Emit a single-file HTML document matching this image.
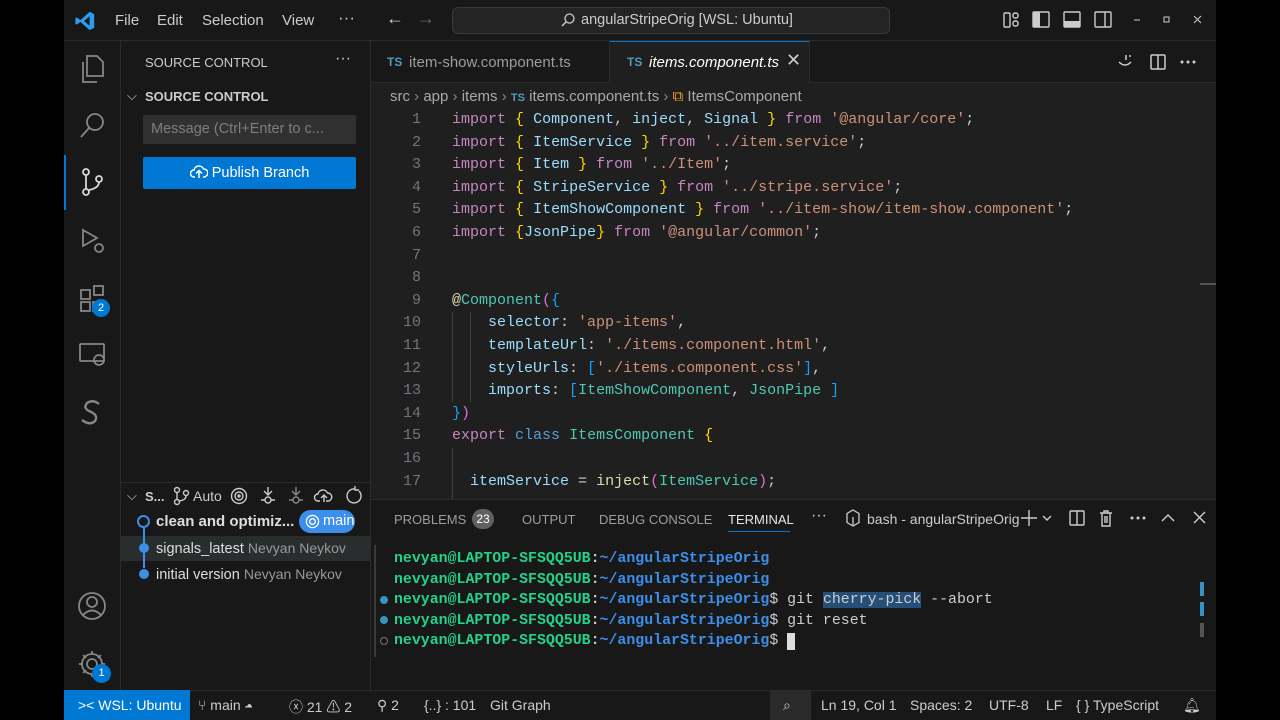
<!DOCTYPE html>
<html><head><meta charset="utf-8"><style>
*{box-sizing:border-box;margin:0;padding:0}
body{width:1280px;height:720px;background:#000;position:relative;overflow:hidden;font-family:"Liberation Sans",sans-serif;color:#ccc}
.a{position:absolute}
.mono{font-family:"Liberation Mono",monospace}
.code div{position:absolute;left:0;white-space:pre;font-size:15px;height:22px;line-height:22px}
.ln{color:#6e7681;width:81px;padding-right:31px;text-align:right;font-size:15px;display:inline-block}
.k{color:#c586c0}.b{color:#ffd700}.v{color:#9cdcfe}.s{color:#ce9178}.t{color:#4ec9b0}.p{color:#da70d6}.bl{color:#179fff}.kw{color:#569cd6}.f{color:#dcdcaa}
.term div{position:absolute;left:394px;white-space:pre;font-size:14.9px;font-weight:bold;line-height:20px}
.g{color:#23d18b}.tb{color:#3b8eea}
.st{font-size:14px;color:#ccc;top:697px}
</style></head><body>
<div class="a" style="left:64px;top:0;width:1152px;height:720px;background:#1f1f1f"></div>
<div class="a" style="left:64px;top:0;width:1152px;height:41px;background:#181818;border-bottom:1px solid #2b2b2b"></div>
<svg class="a" style="left:74px;top:10px" width="22" height="22" viewBox="0 0 24 24"><path d="M17 2 L22 4.5 V19.5 L17 22 L7 13 L3 16 L1.5 15 V9 L3 8 L7 11 Z M17 7 L11 12 L17 17 Z" fill="#2c9cf0"/></svg>
<div class="a" style="left:115px;top:12px;font-size:15px;color:#ccc">File</div>
<div class="a" style="left:157px;top:12px;font-size:15px">Edit</div>
<div class="a" style="left:202px;top:12px;font-size:15px">Selection</div>
<div class="a" style="left:282px;top:12px;font-size:15px">View</div>
<div class="a" style="left:338px;top:8px;font-size:17px">···</div>
<div class="a" style="left:386px;top:8px;font-size:18px">←</div>
<div class="a" style="left:417px;top:8px;font-size:18px;color:#666">→</div>
<div class="a" style="left:452px;top:7px;width:438px;height:27px;background:#242424;border:1px solid #3a3a3a;border-radius:6px"></div>
<svg class="a" style="left:560px;top:12px" width="16" height="16" viewBox="0 0 16 16"><circle cx="9.5" cy="6.5" r="4.5" fill="none" stroke="#ccc" stroke-width="1.3"/><path d="M6 10 L2 14" stroke="#ccc" stroke-width="1.5"/></svg>
<div class="a" style="left:581px;top:12px;font-size:14.5px;color:#ccc">angularStripeOrig [WSL: Ubuntu]</div>
<svg class="a" style="left:1003px;top:10px" width="200" height="20" viewBox="0 0 200 20">
<g fill="none" stroke="#ccc" stroke-width="1.4"><rect x="1" y="3" width="6" height="14" rx="1"/><rect x="10" y="3" width="5" height="5" rx="2"/><rect x="10" y="11" width="5" height="5" rx="2"/>
<rect x="30" y="2" width="16" height="15" rx="1"/><rect x="61" y="2" width="16" height="15" rx="1"/><rect x="92" y="2" width="16" height="15" rx="1"/><path d="M102 2 V17"/></g>
<rect x="30" y="2" width="7" height="15" fill="#ccc"/><rect x="61" y="11" width="16" height="6" fill="#ccc"/>
<path d="M131 10 h6" stroke="#ccc"/><rect x="161" y="7" width="5" height="5" fill="none" stroke="#ccc"/><path d="M191 6 l7 7 M198 6 l-7 7" stroke="#ccc"/></svg>
<div class="a" style="left:64px;top:41px;width:57px;height:649px;background:#181818;border-right:1px solid #2b2b2b"></div>
<div class="a" style="left:64px;top:155px;width:2px;height:55px;background:#0078d4"></div>
<svg class="a" style="left:77px;top:52px" width="32" height="400" viewBox="0 0 32 400" fill="none" stroke="#868686" stroke-width="1.8">
<path d="M10 4 h10 l6 6 v14 h-16 z M6 10 v20 h14"/>
<circle cx="18" cy="70" r="8"/><path d="M12 76 L4 85"/>
<g stroke="#d7d7d7"><circle cx="9" cy="120" r="3"/><circle cx="9" cy="140" r="3"/><circle cx="22" cy="127" r="3"/><path d="M9 123 v14 M22 130 q0 6 -10 8"/></g>
<path d="M6 178 l14 8 l-14 8 z"/><circle cx="22" cy="196" r="4"/>
<rect x="4" y="238" width="9" height="9"/><rect x="4" y="250" width="9" height="9"/><rect x="16" y="250" width="9" height="9"/><rect x="17" y="234" width="9" height="9"/>
<rect x="3" y="292" width="24" height="17" rx="1"/><circle cx="22" cy="308" r="5"/>
<path d="M22 352 q-6 -5 -12 -1 q-4 5 2 8 q10 4 6 10 q-5 5 -13 -1" stroke-width="2.4"/></svg>
<div class="a" style="left:92px;top:299px;width:18px;height:18px;border-radius:9px;background:#0078d4;color:#fff;font-size:11px;text-align:center;line-height:18px">2</div>
<svg class="a" style="left:77px;top:590px" width="32" height="90" viewBox="0 0 32 90" fill="none" stroke="#868686" stroke-width="1.8">
<circle cx="15" cy="16" r="13"/><circle cx="15" cy="12" r="5"/><path d="M6 25 q9 -9 18 0"/>
<circle cx="15" cy="74" r="5"/><path d="M15 61 v4 M15 83 v4 M2 74 h4 M24 74 h4 M6 65 l3 3 M21 80 l3 3 M24 65 l-3 3 M9 80 l-3 3"/><circle cx="15" cy="74" r="10"/></svg>
<div class="a" style="left:92px;top:664px;width:19px;height:19px;border-radius:10px;background:#0078d4;color:#fff;font-size:11px;text-align:center;line-height:19px">1</div>
<div class="a" style="left:121px;top:41px;width:250px;height:649px;background:#181818;border-right:1px solid #2b2b2b"></div>
<div class="a" style="left:145px;top:55px;font-size:13px;color:#ccc">SOURCE CONTROL</div>
<div class="a" style="left:335px;top:50px;font-size:16px">···</div>
<div class="a" style="left:127px;top:88px;font-size:13px">⌵</div>
<div class="a" style="left:145px;top:89px;font-size:13px;font-weight:bold;color:#ccc">SOURCE CONTROL</div>
<div class="a" style="left:143px;top:115px;width:213px;height:29px;background:#313131;border-radius:2px;color:#7e7e7e;font-size:14.5px;padding:6px 8px">Message (Ctrl+Enter to c...</div>
<div class="a" style="left:143px;top:157px;width:213px;height:32px;background:#0078d4;border-radius:2px;color:#fff;font-size:14.5px;text-align:center;line-height:32px"><svg width="18" height="14" viewBox="0 0 18 14" style="vertical-align:-2px;margin-right:4px"><path d="M5 12 h-1 a3.5 3.5 0 0 1 0-7 a5 5 0 0 1 9.5-1 a3.5 3.5 0 0 1 0.5 8 h-1 M9 13 V6 M6 8.5 l3-3 l3 3" fill="none" stroke="#fff" stroke-width="1.5"/></svg>Publish Branch</div>
<div class="a" style="left:121px;top:482px;width:250px;height:1px;background:#2b2b2b"></div>
<div class="a" style="left:127px;top:488px;font-size:13px">⌵</div>
<div class="a" style="left:145px;top:489px;font-size:13px;font-weight:bold">S...</div>
<div class="a" style="left:193px;top:488px;font-size:14px">Auto</div>
<svg class="a" style="left:173px;top:486px" width="190" height="20" viewBox="0 0 190 20" fill="none" stroke="#ccc" stroke-width="1.4">
<circle cx="4" cy="4" r="2.5"/><circle cx="4" cy="16" r="2.5"/><circle cx="13" cy="7" r="2.5"/><path d="M4 7 v6 M13 10 q0 4 -7 5"/>
<circle cx="66" cy="10" r="7.5"/><circle cx="66" cy="10" r="4"/><circle cx="66" cy="10" r="1"/>
<path d="M95 1 v8 M91 5 l4 4 l4-4"/><circle cx="95" cy="14" r="3"/><path d="M88 14 h4 M98 14 h4"/>
<g stroke="#888"><path d="M123 1 v8 M119 5 l4 4 l4-4"/><circle cx="123" cy="14" r="3"/><path d="M116 14 h4 M126 14 h4"/></g>
<path d="M147 15 h-2 a3.5 3.5 0 0 1 0-7 a5 5 0 0 1 9.5-1 a3.5 3.5 0 0 1 0.5 8 h-2 M151 16 V9 M148 12 l3-3 l3 3"/>
<path d="M186 5 a7 7 0 1 1 -4 -2 M182 0 v4 h4"/></svg>
<div class="a" style="left:121px;top:536px;width:249px;height:25px;background:#2a2d2e"></div>
<div class="a" style="left:143px;top:528px;width:2px;height:40px;background:#3b8eea"></div>
<div class="a" style="left:137px;top:515px;width:13px;height:13px;border:2px solid #3b8eea;border-radius:50%;background:#181818"></div>
<div class="a" style="left:139px;top:543px;width:10px;height:10px;border-radius:50%;background:#3b8eea"></div>
<div class="a" style="left:139px;top:569px;width:10px;height:10px;border-radius:50%;background:#3b8eea"></div>
<div class="a" style="left:156px;top:513px;font-size:15px;font-weight:bold;color:#ddd">clean and optimiz...</div>
<div class="a" style="left:299px;top:510px;width:56px;height:23px;border-radius:12px;background:#3b8eea;color:#fff;font-size:14.5px;line-height:23px;padding-left:24px">main</div>
<svg class="a" style="left:305px;top:514px" width="15" height="15" viewBox="0 0 16 16" fill="none" stroke="#fff" stroke-width="1.4"><circle cx="8" cy="8" r="6.5"/><circle cx="8" cy="8" r="3"/></svg>
<div class="a" style="left:156px;top:540px;font-size:14.5px;color:#ddd">signals_latest <span style="color:#999;font-size:14px">Nevyan Neykov</span></div>
<div class="a" style="left:156px;top:566px;font-size:14.5px;color:#ddd">initial version <span style="color:#999;font-size:14px">Nevyan Neykov</span></div>
<div class="a" style="left:371px;top:41px;width:845px;height:42px;background:#181818;border-bottom:1px solid #2b2b2b"></div>
<div class="a" style="left:371px;top:41px;width:239px;height:42px;border-right:1px solid #2b2b2b"></div>
<div class="a" style="left:387px;top:55px;font-size:12px;font-weight:bold;color:#519aba">TS</div>
<div class="a" style="left:409px;top:54px;font-size:15px;color:#9d9d9d">item-show.component.ts</div>
<div class="a" style="left:610px;top:41px;width:200px;height:43px;background:#1f1f1f;border-top:1px solid #0078d4;border-right:1px solid #2b2b2b"></div>
<div class="a" style="left:627px;top:55px;font-size:12px;font-weight:bold;color:#519aba">TS</div>
<div class="a" style="left:649px;top:54px;font-size:15px;font-style:italic;color:#fff">items.component.ts</div>
<div class="a" style="left:786px;top:50px;font-size:18px;color:#ccc">✕</div>
<svg class="a" style="left:1117px;top:52px" width="85" height="20" viewBox="0 0 85 20" fill="none" stroke="#ccc" stroke-width="1.5"><path d="M2 10 q6 6 12 0 M9 3 v5 M13 3 v2"/><rect x="34" y="3" width="14" height="14" rx="1"/><path d="M41 3 v14"/><circle cx="65" cy="10" r=".8" fill="#ccc"/><circle cx="71" cy="10" r=".8" fill="#ccc"/><circle cx="77" cy="10" r=".8" fill="#ccc"/></svg>
<div class="a" style="left:390px;top:88px;font-size:15px;color:#a9a9a9;white-space:pre">src <span style="color:#888">›</span> app <span style="color:#888">›</span> items <span style="color:#888">›</span> <span style="color:#519aba;font-size:11px;font-weight:bold">TS</span> items.component.ts <span style="color:#888">›</span> <span style="color:#ee9d28">⧉</span> ItemsComponent</div>
<div class="a code mono" style="left:371px;top:109px;width:845px;height:390px;overflow:hidden">
<div style="top:0"><span class="ln">1</span><span class="k">import</span> <span class="b">{</span> <span class="v">Component</span>, <span class="v">inject</span>, <span class="v">Signal</span> <span class="b">}</span> <span class="k">from</span> <span class="s">'@angular/core'</span>;</div>
<div style="top:22.6px"><span class="ln">2</span><span class="k">import</span> <span class="b">{</span> <span class="v">ItemService</span> <span class="b">}</span> <span class="k">from</span> <span class="s">'../item.service'</span>;</div>
<div style="top:45.2px"><span class="ln">3</span><span class="k">import</span> <span class="b">{</span> <span class="v">Item</span> <span class="b">}</span> <span class="k">from</span> <span class="s">'../Item'</span>;</div>
<div style="top:67.8px"><span class="ln">4</span><span class="k">import</span> <span class="b">{</span> <span class="v">StripeService</span> <span class="b">}</span> <span class="k">from</span> <span class="s">'../stripe.service'</span>;</div>
<div style="top:90.4px"><span class="ln">5</span><span class="k">import</span> <span class="b">{</span> <span class="v">ItemShowComponent</span> <span class="b">}</span> <span class="k">from</span> <span class="s">'../item-show/item-show.component'</span>;</div>
<div style="top:113px"><span class="ln">6</span><span class="k">import</span> <span class="b">{</span><span class="v">JsonPipe</span><span class="b">}</span> <span class="k">from</span> <span class="s">'@angular/common'</span>;</div>
<div style="top:135.6px"><span class="ln">7</span></div>
<div style="top:158.2px"><span class="ln">8</span></div>
<div style="top:180.8px"><span class="ln">9</span><span class="f">@</span><span class="t">Component</span><span class="p">(</span><span class="bl">{</span></div>
<div style="top:203.4px"><span class="ln">10</span>    <span class="v">selector</span>: <span class="s">'app-items'</span>,</div>
<div style="top:226px"><span class="ln">11</span>    <span class="v">templateUrl</span>: <span class="s">'./items.component.html'</span>,</div>
<div style="top:248.6px"><span class="ln">12</span>    <span class="v">styleUrls</span>: <span class="bl">[</span><span class="s">'./items.component.css'</span><span class="bl">]</span>,</div>
<div style="top:271.2px"><span class="ln">13</span>    <span class="v">imports</span>: <span class="bl">[</span><span class="t">ItemShowComponent</span>, <span class="t">JsonPipe</span> <span class="bl">]</span></div>
<div style="top:293.8px"><span class="ln">14</span><span class="bl">}</span><span class="p">)</span></div>
<div style="top:316.4px"><span class="ln">15</span><span class="k">export</span> <span class="kw">class</span> <span class="t">ItemsComponent</span> <span class="b">{</span></div>
<div style="top:339px"><span class="ln">16</span></div>
<div style="top:361.6px"><span class="ln">17</span>  <span class="v">itemService</span> = <span class="f">inject</span><span class="p">(</span><span class="t">ItemService</span><span class="p">)</span>;</div>
</div>
<div class="a" style="left:452px;top:312px;width:1px;height:90px;background:#404040"></div>
<div class="a" style="left:470px;top:312px;width:1px;height:90px;background:#404040"></div>
<div class="a" style="left:452px;top:448px;width:1px;height:52px;background:#404040"></div>
<div class="a" style="left:1200px;top:283px;width:16px;height:2px;background:#555"></div>
<div class="a" style="left:371px;top:499px;width:845px;height:191px;background:#181818;border-top:1px solid #2b2b2b"></div>
<div class="a" style="left:394px;top:512px;font-size:13px;color:#9d9d9d">PROBLEMS</div>
<div class="a" style="left:472px;top:509px;width:22px;height:20px;border-radius:10px;background:#616161;color:#fff;font-size:12px;text-align:center;line-height:20px">23</div>
<div class="a" style="left:522px;top:512px;font-size:13px;color:#9d9d9d">OUTPUT</div>
<div class="a" style="left:599px;top:512px;font-size:13px;color:#9d9d9d">DEBUG CONSOLE</div>
<div class="a" style="left:728px;top:512px;font-size:13px;color:#e7e7e7">TERMINAL</div>
<div class="a" style="left:728px;top:531px;width:62px;height:1px;background:#0078d4"></div>
<div class="a" style="left:811px;top:507px;font-size:16px">···</div>
<div class="a" style="left:867px;top:511px;font-size:14px;color:#ccc">bash - angularStripeOrig</div>
<svg class="a" style="left:845px;top:509px" width="16" height="18" viewBox="0 0 16 18" fill="none" stroke="#ccc" stroke-width="1.3"><path d="M8 1 l6 3.5 v9 L8 17 L2 13.5 v-9 z"/><path d="M8 8 v8" /></svg>
<svg class="a" style="left:1018px;top:508px" width="195" height="20" viewBox="0 0 195 20" fill="none" stroke="#ccc" stroke-width="1.4">
<path d="M11 2 v16 M3 10 h16 M25 8 l4 4 l4-4"/><rect x="52" y="3" width="14" height="14" rx="1"/><path d="M59 3 v14"/>
<path d="M82 5 h12 M86 5 v-2 h4 v2 M84 5 v13 h8 v-13 M87 8 v7 M89 8 v7"/>
<circle cx="114" cy="10" r=".8" fill="#ccc"/><circle cx="120" cy="10" r=".8" fill="#ccc"/><circle cx="126" cy="10" r=".8" fill="#ccc"/>
<path d="M144 13 l6-6 l6 6 M176 4 l11 11 M187 4 l-11 11"/></svg>
<div class="a" style="left:374px;top:545px;width:2px;height:112px;background:#3a3a3a"></div>
<div class="a term mono" style="left:0;top:0">
<div style="top:549px"><span class="g">nevyan@LAPTOP-SFSQQ5UB</span>:<span class="tb">~/angularStripeOrig</span></div>
<div style="top:569.5px"><span class="g">nevyan@LAPTOP-SFSQQ5UB</span>:<span class="tb">~/angularStripeOrig</span></div>
<div style="top:590px"><span class="g">nevyan@LAPTOP-SFSQQ5UB</span>:<span class="tb">~/angularStripeOrig</span><span style="color:#ccc;font-weight:normal">$ git <span style="background:#264f78">cherry-pick</span> --abort</span></div>
<div style="top:610.5px"><span class="g">nevyan@LAPTOP-SFSQQ5UB</span>:<span class="tb">~/angularStripeOrig</span><span style="color:#ccc;font-weight:normal">$ git reset</span></div>
<div style="top:631px"><span class="g">nevyan@LAPTOP-SFSQQ5UB</span>:<span class="tb">~/angularStripeOrig</span><span style="color:#ccc;font-weight:normal">$ </span></div>
</div>
<div class="a" style="left:787px;top:633px;width:8px;height:17px;background:#ddd"></div>
<div class="a" style="left:380px;top:596px;width:8px;height:8px;border-radius:50%;background:#3794c0"></div>
<div class="a" style="left:380px;top:616px;width:8px;height:8px;border-radius:50%;background:#3794c0"></div>
<div class="a" style="left:380px;top:637px;width:8px;height:8px;border-radius:50%;border:1px solid #777"></div>
<div class="a" style="left:1200px;top:582px;width:4px;height:14px;background:#3794c0"></div>
<div class="a" style="left:1200px;top:602px;width:4px;height:14px;background:#3794c0"></div>
<div class="a" style="left:1200px;top:623px;width:4px;height:14px;background:#555"></div>
<div class="a" style="left:64px;top:690px;width:1152px;height:30px;background:#181818;border-top:1px solid #2b2b2b"></div>
<div class="a" style="left:64px;top:690px;width:126px;height:30px;background:#0078d4"></div>
<div class="a st" style="left:78px;color:#fff">&gt;&lt; WSL: Ubuntu</div>
<div class="a" style="left:770px;top:691px;width:41px;height:29px;background:#2a2a2a"></div>
<div class="a st" style="left:783px">⌕</div>
<div class="a st" style="left:198px">⑂ main ☁</div>
<div class="a st" style="left:289px">ⓧ 21 ⚠ 2</div>
<div class="a st" style="left:377px">⚲ 2</div>
<div class="a st" style="left:424px">{..} : 101</div>
<div class="a st" style="left:490px">Git Graph</div>
<div class="a st" style="left:821px">Ln 19, Col 1</div>
<div class="a st" style="left:910px">Spaces: 2</div>
<div class="a st" style="left:989px">UTF-8</div>
<div class="a st" style="left:1046px">LF</div>
<div class="a st" style="left:1076px">{ } TypeScript</div>
<div class="a st" style="left:1183px">🔔︎</div>
</body></html>
